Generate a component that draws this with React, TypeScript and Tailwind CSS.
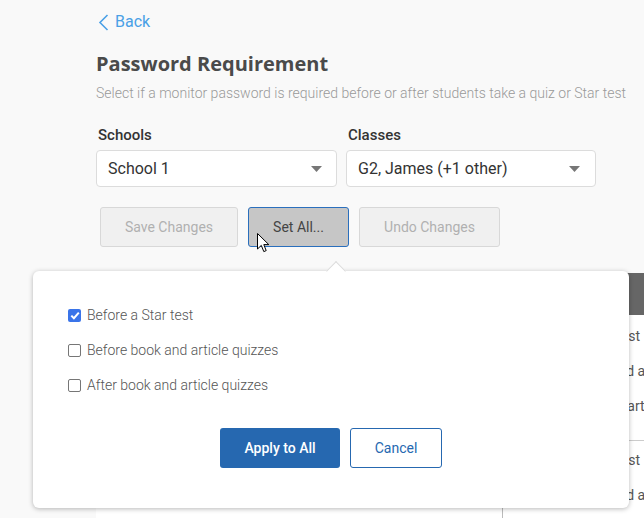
const roboto = { fontFamily: 'Roboto, "Liberation Sans", sans-serif' }

function Caret() {
  return (
    <svg width="11" height="6" viewBox="0 0 11 6" className="shrink-0">
      <path d="M0 0 L11 0 L5.5 6 Z" fill="#777" />
    </svg>
  )
}

function Check({ checked }: { checked?: boolean }) {
  if (checked) return (
    <span className="w-[13px] h-[13px] rounded-[2px] bg-[#3a74e9] flex items-center justify-center shrink-0">
      <svg width="10" height="9" viewBox="0 0 10 9">
        <path d="M1.3 4.6 L3.9 7.2 L8.8 1.6" stroke="#fff" strokeWidth="2" fill="none" />
      </svg>
    </span>
  )
  return <span className="w-[13px] h-[13px] rounded-[2px] border border-[#767676] bg-white shrink-0" />
}

function Cursor() {
  return (
    <svg width="13" height="20" viewBox="0 0 13 20" className="absolute left-[257px] top-[233px]">
      <path d="M0.5 0.5 L0.5 16 L4.3 12.4 L6.8 18.6 L9.2 17.6 L6.8 11.6 L11.8 11.6 Z" fill="#fff" stroke="#000" strokeWidth="1" strokeLinejoin="round" />
    </svg>
  )
}

const rows = ['Before a Star test', 'Before book and article quizzes', 'After book and article quizzes']

export default function App() {
  const options = [
    { label: 'Before a Star test', checked: true },
    { label: 'Before book and article quizzes' },
    { label: 'After book and article quizzes' },
  ]

  return (
    <div className="relative w-full h-[518px] overflow-hidden bg-[#f9f9f9]" style={roboto}>
      <div className="pl-24 pt-3">
        <a className="flex items-center text-[16px] leading-5 text-[#4aa0e6] w-fit">
          <svg width="11" height="17" viewBox="0 0 11 17" className="ml-[2px] mr-[6px]">
            <path d="M9.5 1 L2 8.5 L9.5 16" stroke="#4aa0e6" strokeWidth="1.6" fill="none" />
          </svg>
          Back
        </a>

        <h1 className="mt-[18px] text-[20px] leading-7 font-bold text-[#4a4a4a]" style={{ fontFamily: '"Open Sans", sans-serif' }}>
          Password Requirement
        </h1>
        <p className="mt-[5px] text-[14px] leading-5 font-light text-[#9a9a9a]">
          Select if a monitor password is required before or after students take a quiz or Star test
        </p>

        <div className="mt-[22px] flex gap-[9px]">
          <div className="w-[241px]">
            <div className="pl-[2px] text-[15px] leading-5 font-medium text-[#333]">Schools</div>
            <div className="mt-[5px] h-[37px] rounded-[4px] border border-[#dcdcdc] bg-white flex items-center justify-between pl-[11px] pr-[14px] text-[16px] text-[#333]">
              School 1
              <Caret />
            </div>
          </div>
          <div className="w-[250px]">
            <div className="pl-[2px] text-[15px] leading-5 font-medium text-[#333]">Classes</div>
            <div className="mt-[5px] h-[37px] rounded-[4px] border border-[#dcdcdc] bg-white flex items-center justify-between pl-[11px] pr-[15px] text-[16px] text-[#333]">
              G2, James (+1 other)
              <Caret />
            </div>
          </div>
        </div>

        <div className="mt-5 ml-1 flex gap-[10px] text-[14px]">
          <button className="w-[138px] h-[40px] rounded-[3px] border border-[#d8d8d8] bg-[#f0f0f0] text-[#b0b0b0]">Save Changes</button>
          <button className="w-[101px] h-[40px] rounded-[3px] border border-[#2a6fbd] bg-[#c6c6c6] text-[#444]">Set All...</button>
          <button className="w-[141px] h-[40px] rounded-[3px] border border-[#d8d8d8] bg-[#f0f0f0] text-[#b0b0b0]">Undo Changes</button>
        </div>

        <div className="mt-[26px] pl-[1px] w-[700px] bg-white text-[14px] text-[#555]">
          <div className="h-[42px] bg-[#666]" />
          <div className="flex">
            <div className="w-[406px] border-r border-[#bbb]" />
            <div className="flex-1">
              <div className="pt-[4px] pb-[16px] border-b border-[#ccc]">
                {rows.map(t => (
                  <div key={t} className="h-[35px] flex items-center pl-[29px] whitespace-nowrap">{t}</div>
                ))}
              </div>
              <div className="pt-[2px] pb-4">
                {rows.map(t => (
                  <div key={t} className="h-[35px] flex items-center pl-[29px] whitespace-nowrap">{t}</div>
                ))}
              </div>
            </div>
          </div>
        </div>
      </div>

      <Cursor />

      <div className="absolute left-[33px] top-[271px] w-[596px] h-[237px] rounded-md bg-white shadow-[0_1px_5px_rgba(0,0,0,0.28)]">
        <div className="absolute left-[296px] -top-[7px] w-[14px] h-[14px] rotate-45 bg-white border-l border-t border-[#dcdcdc]" />
        <div className="relative pt-[27px] pl-[35px]">
          {options.map(o => (
            <label key={o.label} className="h-[35px] flex items-center gap-[6px] text-[14px] text-[#555] font-light">
              <Check checked={o.checked} />
              {o.label}
            </label>
          ))}
        </div>
        <div className="mt-[25px] flex justify-center gap-[10px] text-[14px]">
          <button className="w-[120px] h-[40px] rounded-[3px] bg-[#2668b0] text-white font-medium">Apply to All</button>
          <button className="w-[92px] h-[40px] rounded-[3px] border border-[#2668b0] bg-white text-[#2668b0]">Cancel</button>
        </div>
      </div>
    </div>
  )
}
